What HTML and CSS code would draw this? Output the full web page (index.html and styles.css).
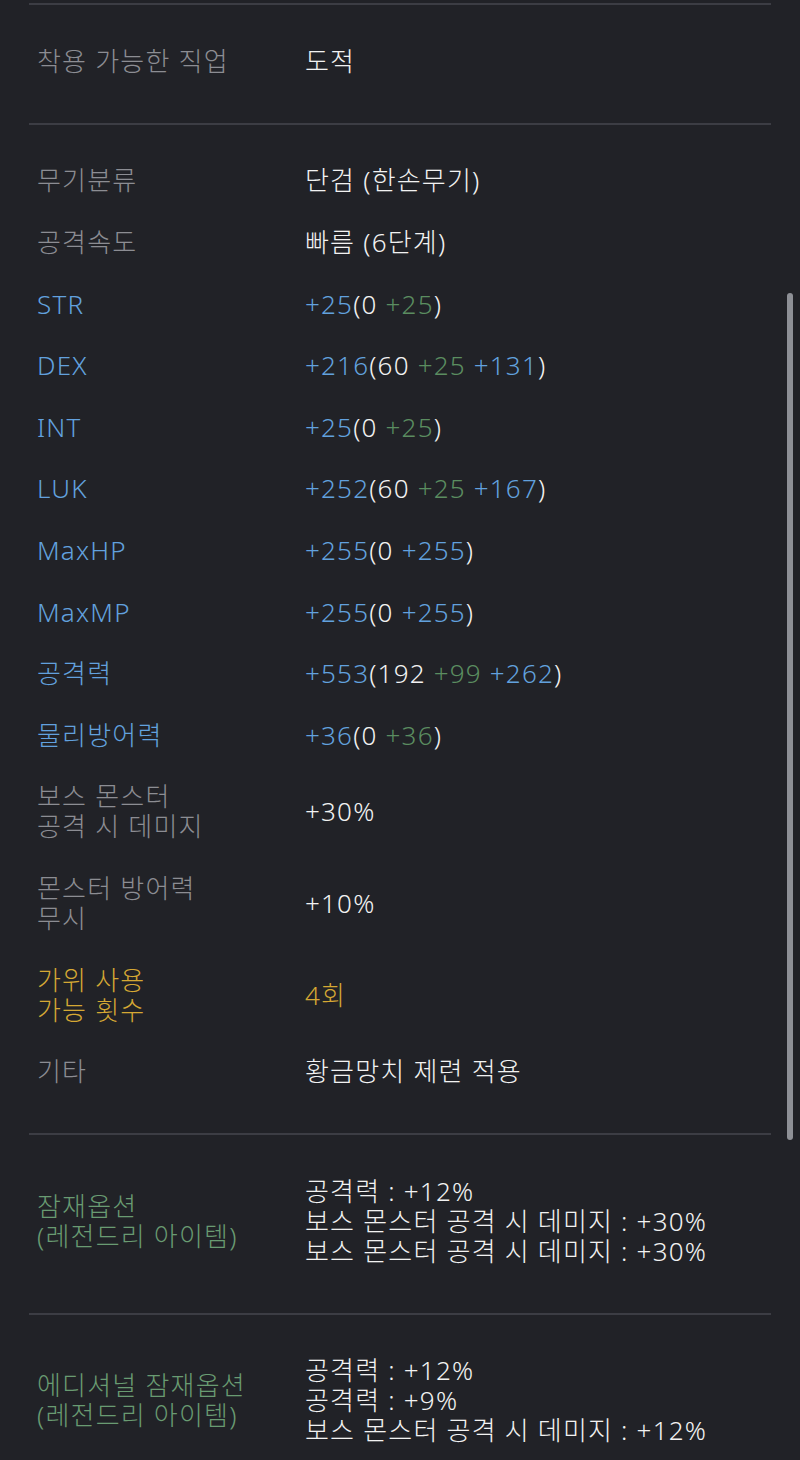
FILE: index.html
```html
<!DOCTYPE html>
<html lang="ko">

<head>
    <meta charset="UTF-8">
    <meta name="viewport" content="width=device-width, initial-scale=1.0">
    <title>아이템 정보</title>
    <link rel="stylesheet" href="styles.css">
</head>

<body>
    <div class="container">
        <section class="group">
            <div class="row">
                <div class="label">착용 가능한 직업</div>
                <div class="value">도적</div>
            </div>
        </section>

        <section class="group">
            <div class="row">
                <div class="label">무기분류</div>
                <div class="value">단검 (한손무기)</div>
            </div>
            <div class="row">
                <div class="label">공격속도</div>
                <div class="value">빠름 (6단계)</div>
            </div>
            <div class="row">
                <div class="label blue">STR</div>
                <div class="value"><span class="blue">+25</span>(0 <span class="green">+25</span>)</div>
            </div>
            <div class="row">
                <div class="label blue">DEX</div>
                <div class="value"><span class="blue">+216</span>(60 <span class="green">+25</span> <span class="blue">+131</span>)</div>
            </div>
            <div class="row">
                <div class="label blue">INT</div>
                <div class="value"><span class="blue">+25</span>(0 <span class="green">+25</span>)</div>
            </div>
            <div class="row">
                <div class="label blue">LUK</div>
                <div class="value"><span class="blue">+252</span>(60 <span class="green">+25</span> <span class="blue">+167</span>)</div>
            </div>
            <div class="row">
                <div class="label blue">MaxHP</div>
                <div class="value"><span class="blue">+255</span>(0 <span class="blue">+255</span>)</div>
            </div>
            <div class="row">
                <div class="label blue">MaxMP</div>
                <div class="value"><span class="blue">+255</span>(0 <span class="blue">+255</span>)</div>
            </div>
            <div class="row">
                <div class="label blue">공격력</div>
                <div class="value"><span class="blue">+553</span>(192 <span class="green">+99</span> <span class="blue">+262</span>)</div>
            </div>
            <div class="row">
                <div class="label blue">물리방어력</div>
                <div class="value"><span class="blue">+36</span>(0 <span class="green">+36</span>)</div>
            </div>
            <div class="row">
                <div class="label">보스 몬스터<br>공격 시 데미지</div>
                <div class="value">+30%</div>
            </div>
            <div class="row">
                <div class="label">몬스터 방어력<br>무시</div>
                <div class="value">+10%</div>
            </div>
            <div class="row">
                <div class="label gold">가위 사용<br>가능 횟수</div>
                <div class="value gold">4회</div>
            </div>
            <div class="row">
                <div class="label">기타</div>
                <div class="value">황금망치 제련 적용</div>
            </div>
        </section>

        <section class="group">
            <div class="row">
                <div class="label potential">잠재옵션<br>(레전드리 아이템)</div>
                <div class="value">공격력 : +12%<br>보스 몬스터 공격 시 데미지 : +30%<br>보스 몬스터 공격 시 데미지 : +30%</div>
            </div>
        </section>

        <section class="group">
            <div class="row">
                <div class="label potential">에디셔널 잠재옵션<br>(레전드리 아이템)</div>
                <div class="value">공격력 : +12%<br>공격력 : +9%<br>보스 몬스터 공격 시 데미지 : +12%</div>
            </div>
        </section>
    </div>

    <div class="scroll-thumb"></div>
</body>

</html>
```

FILE: styles.css
```css
body {
    margin: 0;
    background-color: #212227;
    font-family: "Noto Sans", "Noto Sans CJK KR", sans-serif;
    font-weight: 300;
    font-size: 26px;
    line-height: 30px;
    color: #f2f2f2;
}

.container {
    padding: 3px 29px 0 29px;
}

.group {
    border-top: 2px solid #3c3d44;
    padding: 25px 0 31px 0;
}

.row {
    display: grid;
    grid-template-columns: 268px 1fr;
    align-items: center;
    padding: 15.8px 0 15.8px 8px;
    letter-spacing: 1.2px;
}

.label {
    color: #8c8d93;
}

.blue {
    color: #62a1de;
}

.green {
    color: #5b8d60;
}

.gold {
    color: #d5a834;
}

.label.potential {
    color: #699b72;
}

.scroll-thumb {
    position: absolute;
    left: 787px;
    top: 293px;
    width: 6px;
    height: 847px;
    border-radius: 3px;
    background-color: #8e9096;
}
```
